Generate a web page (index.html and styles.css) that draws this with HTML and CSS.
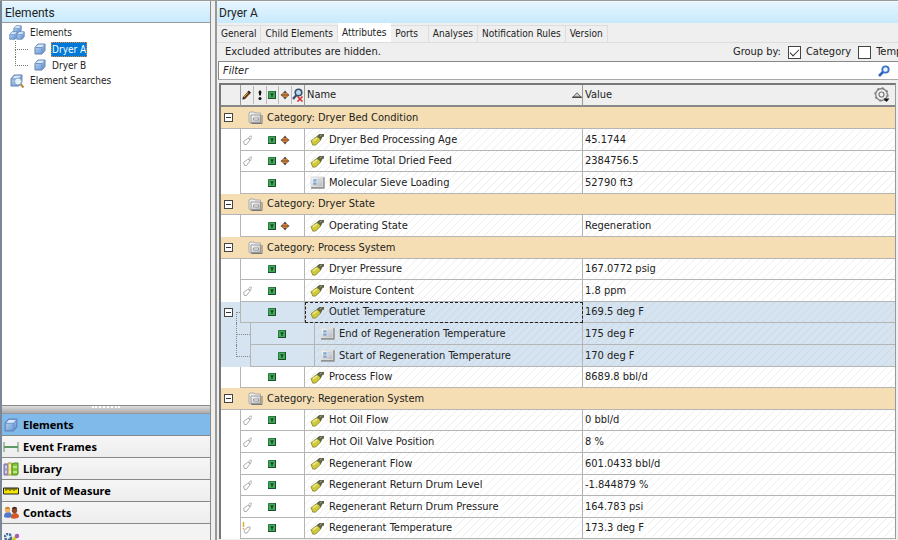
FILE: index.html
```
<!DOCTYPE HTML>
<html>
<head>
<meta charset="UTF-8">
<title>Dryer A</title>
<link rel="stylesheet" href="styles.css">
<script src="grid.js"></script>
</head>

<body>
<svg class="defs" aria-hidden="true">
	<linearGradient id="gCube" x1="0" y1="0" x2="1" y2="1">
		<stop offset="0" stop-color="#c4dcf5"/><stop offset="1" stop-color="#5b8fd0"/>
	</linearGradient>
	<linearGradient id="gGrey" x1="0" y1="0" x2="1" y2="1">
		<stop offset="0" stop-color="#fff"/><stop offset="1" stop-color="#b4b4b4"/>
	</linearGradient>
	<symbol id="cube" viewBox="0 0 12 12">
		<path d="M1 4.5 4 1h7v6.5L8 11H1z" fill="url(#gCube)" stroke="#6283b4" stroke-linejoin="round"/>
		<path d="M1.5 4.5H8V11M8 4.5 11 1.5" fill="none" stroke="#6f96cb"/>
		<path d="M2 4 4.3 1.7h5.9L8 4z" fill="#d9e9fa"/>
	</symbol>
	<symbol id="cubes" viewBox="0 0 16 16">
		<use href="#cube" x="4" y="0" width="9" height="9"/>
		<use href="#cube" x="0" y="6" width="9" height="9"/>
		<use href="#cube" x="7" y="6" width="9" height="9"/>
	</symbol>
	<symbol id="search" viewBox="0 0 16 16">
		<use href="#cube" x="1" y="1" width="13" height="13"/>
		<circle cx="9" cy="8.500" r="3.500" fill="#e4f3fc" stroke="#8aa8c6"/>
		<path d="m11.500 11 3 3.500" stroke="#b98a3c" stroke-width="2"/>
	</symbol>
	<symbol id="frames" viewBox="0 0 16 12">
		<path d="M1 1v10M15 1v10" stroke="#8fae94" stroke-width="1.500"/><path d="M1 6h14" stroke="#5e9867" stroke-width="2"/>
	</symbol>
	<symbol id="library" viewBox="0 0 16 14">
		<path d="M1 2h4v11H1z" fill="#a9a4dd" stroke="#766fb4"/><path d="M5 1h4v12H5z" fill="#f1e28a" stroke="#a79b45"/>
		<path d="M9 2l2-1h4v11l-1 1H9z" fill="#7ec832" stroke="#538b2a"/>
		<path d="M2 5h2M6 4h2M10 5h4M2 10h2M6 10h2M10 10h4" stroke="#fff"/>
	</symbol>
	<symbol id="ruler" viewBox="0 0 16 8">
		<path d="M.5 1h15v6H.5z" fill="#f5e500" stroke="#222"/><path d="M3 1v3M5 1v2M7 1v3M9 1v2M11 1v3M13 1v2" stroke="#222"/>
	</symbol>
	<symbol id="people" viewBox="0 0 16 14">
		<path d="M1 11c0-4 2-5 4-5s4 1 4 5c-2 1-6 1-8 0z" fill="#4e79cc"/><circle cx="4.500" cy="4" r="2.700" fill="#f0b26a"/><path d="M2 3c0-3 5-3 5 0z" fill="#c88b22"/>
		<path d="M8 12c0-4 2-5 4-5s4 1 4 4c-2 2-6 2-8 1z" fill="#d05b28"/><circle cx="11.500" cy="4.500" r="2.700" fill="#8c4a2a"/><path d="M9 3c0-3 5-3 5 0z" fill="#4c2b20"/>
	</symbol>
	<symbol id="plug" viewBox="0 0 16 16">
		<circle cx="4" cy="4" r="3" fill="none" stroke="#3b6a9c" stroke-width="2.500" stroke-dasharray="2 1"/>
		<path d="m6 10 7-7" stroke="#d6cb20" stroke-width="3"/><circle cx="13" cy="3" r="2.200" fill="#a35ab8"/><path d="m5 6 6 6" stroke="#355f92" stroke-width="3"/>
	</symbol>
	<symbol id="pencil" viewBox="0 0 12 12">
		<path d="m2.500 9.500 6-6.500" stroke="#6b3a12" stroke-width="3.600"/><path d="m2.500 8.500 5.500-6" stroke="#d9a441" stroke-width="1.200"/>
		<path d="m8 3.500 1.500-1.500" stroke="#2d1a1a" stroke-width="3.600"/><path d="M.5 11.500 1.200 8.200 3.800 10.700z" fill="#111"/>
	</symbol>
	<symbol id="bang" viewBox="0 0 6 12">
		<path d="M3 1 4.500 3 3.700 6.500H2.300L1.500 3z" fill="#111"/><circle cx="3" cy="9.500" r="1.500" fill="#111"/>
	</symbol>
	<symbol id="green" viewBox="0 0 8 8">
		<path d="M.5.5h7v7h-7z" fill="#3eaa5a" stroke="#287a3e"/><path d="M7.500 0v7.500H0" fill="none" stroke="#1d4b2a"/>
		<path d="M2 2.500h4L4.500 4v2h-1V4z" fill="#0e2c18"/>
	</symbol>
	<symbol id="diamond" viewBox="0 0 10 10">
		<path d="M5 .5 7 3H3zM5 9.500 7 7H3zM.5 5 3 3v4zM9.500 5 7 3v4z" fill="#5b4636"/>
		<path d="M3 3h4l1 2-1 2H3L2 5z" fill="#d2823c"/><path d="M2 5h6" stroke="#8a5327"/>
	</symbol>
	<symbol id="excluded" viewBox="0 0 12 14">
		<circle cx="6.500" cy="4.500" r="3.300" fill="#b9d8ee" stroke="#39506b" stroke-width="1.600"/><path d="m4.500 7-3.500 4" stroke="#39506b" stroke-width="2.200"/>
		<path d="m5.500 8.500 5 5M10.500 8.500l-5 5" stroke="#d8322e" stroke-width="1.600"/>
	</symbol>
	<symbol id="tag" viewBox="0 0 16 14">
		<path d="M1 8.500 7 4l4 1v3l-5 5H3z" fill="#cfca3c" stroke="#8f8b35"/><path d="m3 8.500 4.500-3" stroke="#eeea84" stroke-width="1.500"/>
		<path d="m7 3.500 3-2.500h5v3h-1.500l-2 4-2-2.500z" fill="#5d6145"/><path d="m10.500 3.500 2-1.500" stroke="#b5b79c"/>
	</symbol>
	<symbol id="form" viewBox="0 0 14 12">
		<path d="M1 1h11v9H1z" fill="url(#gGrey)" stroke="#dcdcdc"/><path d="M1 11h12V1" fill="none" stroke="#929292" stroke-width="1.500"/>
		<path d="M3 3h3v2H3zM3 6h3v2H3z" fill="#78a7d8"/><path d="M7 3.500h3M7 6.500h3" stroke="#b7cde4"/>
	</symbol>
	<symbol id="folder" viewBox="0 0 14 13">
		<path d="M.5 2 1.500 1h4l1 1h5.500v10H1.500l-1-1z" fill="#efefef" stroke="#aaa"/><path d="M2.500 4H12v7.500H2.500z" fill="url(#gGrey)" stroke="#999"/><path d="M13.500 4v8.500H3" fill="none" stroke="#777"/>
		<path d="M5 7h5v2H5z" fill="#fff" stroke="#999"/>
	</symbol>
	<symbol id="edit" viewBox="0 0 10 10">
		<path d="M1.500 6.500 5.500 3.500h2v2L4.500 9.500H2.500z" fill="#fff" stroke="#aaa"/><path d="m6 3.500 2-2.500 1.500 0-1 4" fill="none" stroke="#bbb"/>
	</symbol>
	<symbol id="warn" viewBox="0 0 10 12">
		<path d="M1.500 0v5M1.500 6v1.500" stroke="#e5a92c" stroke-width="1.500"/><path d="M2 8.500 6 5h2v2l-3 4H3z" fill="#fff" stroke="#aaa"/>
	</symbol>
	<symbol id="lens" viewBox="0 0 12 12">
		<circle cx="7.500" cy="4.500" r="3.200" fill="#e6f2ff" stroke="#3b74c4" stroke-width="1.800"/><path d="m5 7-4 4" stroke="#3166b8" stroke-width="2.600"/>
	</symbol>
	<symbol id="gear" viewBox="0 0 16 16">
		<circle cx="7.500" cy="7.500" r="5.800" fill="#eee" stroke="#777" stroke-width="1.200"/><circle cx="7.500" cy="7.500" r="6.700" fill="none" stroke="#777" stroke-dasharray="2.600 2.660"/>
		<circle cx="7.500" cy="7.500" r="2.500" fill="none" stroke="#777" stroke-width="1.200"/><path d="M9.500 11.500h6l-3 3.500z" fill="#111"/>
	</symbol>
	<symbol id="asc" viewBox="0 0 10 6">
		<path d="M5 .7 9 5H1z" fill="#ccc" stroke="#666"/><path d="M0 5.300h10" stroke="#333"/>
	</symbol>
</svg>

<div id="container">
	<div id="nav">
		<h2>Elements</h2>
		<ul class="tree">
			<li><div class="node"><svg class="ico16"><use href="#cubes"/></svg><a href="#">Elements</a></div>
				<ul>
					<li class="node"><svg class="ico12"><use href="#cube"/></svg><a href="#" class="selected">Dryer A</a></li>
					<li class="node"><svg class="ico12"><use href="#cube"/></svg><a href="#">Dryer B</a></li>
				</ul>
			</li>
			<li class="node"><svg class="ico16"><use href="#search"/></svg><a href="#">Element Searches</a></li>
		</ul>
		<div class="splitter"></div>
		<div class="buttons">
			<button class="current"><svg><use href="#cube"/></svg>Elements</button>
			<button><svg><use href="#frames"/></svg>Event Frames</button>
			<button><svg><use href="#library"/></svg>Library</button>
			<button><svg><use href="#ruler"/></svg>Unit of Measure</button>
			<button><svg><use href="#people"/></svg>Contacts</button>
		</div>
		<div class="overflow"><svg class="ico16"><use href="#plug"/></svg></div>
	</div>

	<div id="main">
		<h2>Dryer A</h2>
		<div class="tabs">
			<button>General</button>
			<button>Child Elements</button>
			<button class="active">Attributes</button>
			<button class="ports">Ports</button>
			<button>Analyses</button>
			<button>Notification Rules</button>
			<button>Version</button>
		</div>
		<div class="options">
			<span>Excluded attributes are hidden.</span>
			<div class="groupby">Group by:
				<label><input type="checkbox" checked>Category</label>
				<label><input type="checkbox">Template</label>
			</div>
		</div>
		<div class="filter">
			<input type="text" placeholder="Filter" aria-label="Filter">
			<svg class="ico12"><use href="#lens"/></svg>
		</div>
		<table>
			<colgroup><col class="gutter"><col class="step"><col class="flagcol"><col class="step"><col class="namecol"><col></colgroup>
			<thead>
			<tr>
				<th></th>
				<th colspan="2"><div class="flags"><span><svg><use href="#pencil"/></svg></span><span><svg><use href="#bang"/></svg></span><span><svg class="small"><use href="#green"/></svg></span><span><svg><use href="#diamond"/></svg></span><span><svg class="tall"><use href="#excluded"/></svg></span></div></th>
				<th colspan="2"><div class="sort">Name<svg class="arrow"><use href="#asc"/></svg></div></th>
				<th><div class="sort">Value<svg class="ico16"><use href="#gear"/></svg></div></th>
			</tr>
			</thead>
			<tbody id="rows"></tbody>
		</table>
	</div>
</div>
</body>
</html>
```
FILE: grid.js
```
// name, value, flags (e = edit, w = warning, d = diamond), icon
var groups = [
	["Dryer Bed Condition", [
		["Dryer Bed Processing Age", "45.1744", "ed", "tag"],
		["Lifetime Total Dried Feed", "2384756.5", "ed", "tag"],
		["Molecular Sieve Loading", "52790 ft3", "", "form"]
	]],
	["Dryer State", [
		["Operating State", "Regeneration", "d", "tag"]
	]],
	["Process System", [
		["Dryer Pressure", "167.0772 psig", "", "tag"],
		["Moisture Content", "1.8 ppm", "e", "tag"],
		["Outlet Temperature", "169.5 deg F", "", "tag", "parent"],
		["End of Regeneration Temperature", "175 deg F", "", "form", "child"],
		["Start of Regeneration Temperature", "170 deg F", "", "form", "child last"],
		["Process Flow", "8689.8 bbl/d", "", "tag"]
	]],
	["Regeneration System", [
		["Hot Oil Flow", "0 bbl/d", "e", "tag"],
		["Hot Oil Valve Position", "8 %", "e", "tag"],
		["Regenerant Flow", "601.0433 bbl/d", "e", "tag"],
		["Regenerant Return Drum Level", "-1.844879 %", "e", "tag"],
		["Regenerant Return Drum Pressure", "164.783 psi", "e", "tag"],
		["Regenerant Temperature", "173.3 deg F", "w", "tag"]
	]]
];

function icon(name, cls) {
	return '<svg class="' + (cls || "") + '"><use href="#' + name + '"/></svg>';
}

function flagCells(flags) {
	var edit = "";
	if (flags.indexOf("e") >= 0) edit = icon("edit");
	if (flags.indexOf("w") >= 0) edit = icon("warn");
	return '<div class="flags"><span>' + edit + '</span><span></span><span>' + icon("green", "small") +
		'</span><span>' + (flags.indexOf("d") >= 0 ? icon("diamond") : "") + '</span><span></span></div>';
}

// child rows start one step column further in
function attributeRow(a) {
	var kind = a[4] || "";
	var child = kind.indexOf("child") == 0;
	var toggle = kind == "parent" ? '<button class="toggle" aria-label="Collapse"></button>' : "";
	return '<tr class="' + kind + '"><td class="lines" colspan="' + (child ? 2 : 1) + '">' + toggle + '</td>' +
		'<td class="flagbox" colspan="2">' + flagCells(a[2]) + '</td>' +
		'<td class="name hatch" colspan="' + (child ? 1 : 2) + '"><div>' + icon(a[3], "type") + a[0] + '</div></td>' +
		'<td class="hatch">' + a[1] + '</td></tr>';
}

function init() {
	var html = "";
	groups.forEach(function(g) {
		html += '<tr class="category"><td><button class="toggle" aria-label="Collapse"></button></td>' +
			'<td colspan="5"><div>' + icon("folder", "type") + 'Category: ' + g[0] + '</div></td></tr>';
		g[1].forEach(function(a) {
			html += attributeRow(a);
		});
	});
	document.getElementById("rows").innerHTML = html;
}

window.addEventListener("load", init);
```
FILE: styles.css
```
* {box-sizing:border-box;}
body {margin:0; background:#efefef; color:#222; font:11px/14px "DejaVu Sans Condensed", "DejaVu Sans", sans-serif;}
button {font:inherit; color:inherit; margin:0; border:0; padding:0; background:none;}
a {color:inherit; text-decoration:none;}
ul {list-style:none; margin:0; padding:0;}
.defs {position:absolute; width:0; height:0;}
.ico16 {width:16px; height:16px; flex:none;}
.ico12 {width:12px; height:12px; flex:none;}

#container {display:flex; height:100vh; overflow:hidden; border-top:1px solid #9a9a9a;}
h2 {margin:0; height:22px; padding:0 3px; font:12px/22px Roboto, sans-serif; background:linear-gradient(#e4f5ff, #c8eafd); border-top:1px solid #f4fbff; white-space:nowrap;}

/* left side */
#nav {flex:0 0 211px; display:flex; flex-direction:column; border-left:2px solid #7b8797; border-right:1px solid #8a8a8a;}
#nav h2 {border-bottom:1px solid #999;}
.tree {flex:1; background:#fff; padding:2px 0 0 7px; font-size:10px;}
.node {display:flex; align-items:center; gap:5px; height:16px;}
.tree ul {padding-left:6px;}
.tree ul .node {position:relative; padding-left:19px;}
.tree ul .node::before {content:""; position:absolute; left:0; top:0; width:12px; height:8px; border-left:1px dotted #777; border-bottom:1px dotted #777;}
.tree ul .node:first-child::after {content:""; position:absolute; left:0; top:8px; height:8px; border-left:1px dotted #777;}
.selected {background:#0078d7; color:#fff; outline:1px dotted #d98a3a; outline-offset:-1px;}
.tree ul a {padding:0 1px; line-height:15px;}
.splitter {height:9px; border-top:1px solid #8a8a8a; border-bottom:1px solid #999; background:linear-gradient(#ddd, #aaa);}
.splitter::before {content:""; display:block; width:28px; margin:0 auto; border-top:2px dotted #fff;}
.buttons button {display:flex; align-items:center; gap:4px; width:100%; height:22px; padding:0 1px; border-bottom:1px solid #888; background:linear-gradient(#f6f6f6, #ededed); color:#000; font:bold 11px/20px "Noto Sans", sans-serif;}
.buttons svg {width:16px; height:14px;}
.buttons .current {background:#80baea;}
.overflow {height:16px; padding:9px 0 0 2px; background:#f3f3f3; overflow:hidden;}

/* right side */
#main {flex:1; min-width:0; margin-left:4px; border-left:2px solid #999; display:flex; flex-direction:column;}
#main h2 {padding:0 2px;}
.tabs {display:flex; height:20px; align-items:flex-end; border-bottom:1px solid #ddd; font-size:10px;}
.tabs button {height:17px; padding:0 4px; border:1px solid #ddd; border-width:1px 1px 0 0; line-height:16px; white-space:nowrap;}
.tabs .active {height:19px; background:#fff; border-color:#fff;}
.tabs .ports {padding-right:10px;}
.options {display:flex; justify-content:space-between; height:18px; line-height:18px; padding-left:8px; white-space:nowrap;}
.groupby {display:flex; gap:7px; width:165px; overflow:hidden;}
.groupby label {display:flex; align-items:center; gap:5px;}
.groupby input {appearance:none; flex:none; width:13px; height:13px; margin:0; background:#fff; border:1px solid #444;}
.groupby input:checked::before {content:""; display:block; width:8px; height:4px; margin:2px 0 0 1px; border:solid #333; border-width:0 0 1px 1px; transform:rotate(-45deg);}
.filter {display:flex; align-items:center; height:19px; padding-right:8px; margin:0 0 3px 1px; background:#fff; border:1px solid #888; border-right:0; border-bottom-color:#aaa;}
.filter input {flex:1; min-width:0; border:0; outline:0; padding:0 4px; background:none; font:italic 11px "DejaVu Sans Condensed", sans-serif;}
.filter input::placeholder {color:#222; opacity:1;}

table {width:calc(100% - 4px); margin-left:2px; table-layout:fixed; border-collapse:separate; border-spacing:0; border-left:2px solid #777; border-right:1px solid #999; border-top:2px solid #777;}
.gutter {width:20px;}
.step {width:10px;}
.flagcol {width:54px;}
.namecol {width:268px;}
td, th {padding:0; font-weight:normal; text-align:left; white-space:nowrap; border-bottom:1px solid #b5b5b5; border-right:1px solid #b5b5b5; line-height:14px;}
tr {height:22px;}
tbody tr:nth-child(5n), tbody tr:nth-child(5n+3) {height:21px;}
th {background:#efefef; border-bottom:2px solid #888; border-right-color:#999;}
td:last-child, th:last-child {border-right:0;}
td:last-child {padding-left:2px;}
td svg, th svg {display:block; width:12px; height:12px;}
.flags {display:flex; align-items:center;}
.flags span {flex:1; display:flex; justify-content:center; min-width:0;}
.flags svg {width:10px; height:12px; flex:none;}
.flags .small {width:8px; height:8px;}
.flags .tall {width:12px; height:14px;}
th .flags span {border-right:1px solid #bbb; height:18px; align-items:center;}
th .flags span:last-child {border-right:0;}
.sort {display:flex; align-items:center; justify-content:space-between; padding-left:2px;}
.sort .ico16 {width:16px; height:16px; margin-right:5px;}
.sort .arrow {width:10px; height:6px;}
td div {display:flex; align-items:center;}
.type {width:15px; height:13px; margin-right:4px;}
.name div {padding-left:5px;}
.category td {background:#f5deb3; border-right:0;}
.category div {padding-left:5px;}
.lines {position:relative; border-bottom:0; background:#fff;}
.flagbox {background:#fff;}
.hatch {background:linear-gradient(135deg, #fff 44%, #eee 44%, #eee 56%, #fff 56%) 0 0/8px 8px;}
.toggle {display:block; width:9px; height:9px; margin-left:3px; border:1px solid #444; background:linear-gradient(#333, #333) center/5px 1px no-repeat #fff;}
.parent td, .child td {background-color:#d6e4f1;}
.parent .hatch, .child .hatch {background-image:linear-gradient(135deg, #d6e4f1 44%, #ccd9e5 44%, #ccd9e5 56%, #d6e4f1 56%);}
.parent .name {outline:1px dashed #222; outline-offset:-1px;}
.parent .lines::before {content:""; position:absolute; left:15px; top:10px; right:0; bottom:0; border-left:1px dotted #888; border-top:1px dotted #888;}
.child .lines::before {content:""; position:absolute; left:15px; top:0; right:0; height:11px; border-left:1px dotted #888; border-bottom:1px dotted #888;}
.child .lines::after {content:""; position:absolute; left:15px; top:11px; bottom:0; border-left:1px dotted #888;}
.last .lines::after {display:none;}
```
